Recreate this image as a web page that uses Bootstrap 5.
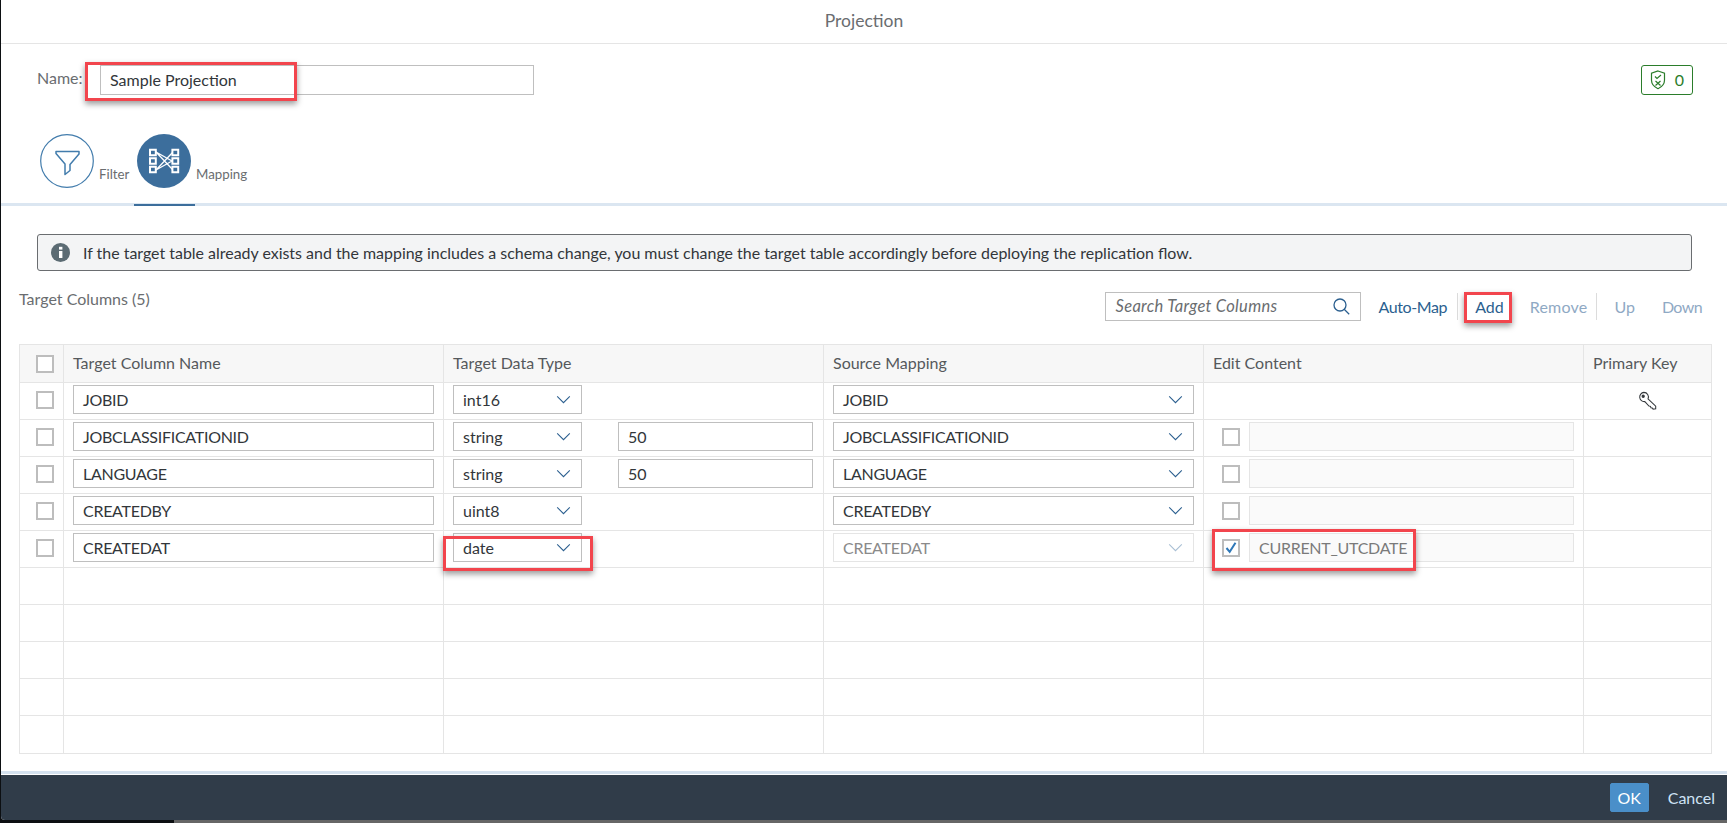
<!doctype html>
<html lang="en"><head><meta charset="utf-8"><title>Projection</title>
<link href="https://cdn.jsdelivr.net/npm/bootstrap@5.3.0/dist/css/bootstrap.min.css" rel="stylesheet">
<style>
html,body{height:100%;overflow:hidden}
body{background:#0c0f12;font-family:Lato,"Liberation Sans",sans-serif;font-size:16px;color:#32363a;position:relative}
.dlg{height:820px;margin-left:1px;background:#fff;border-bottom-left-radius:4px;overflow:hidden}
.dlg-title{height:44px;border-bottom:1px solid #e5e5e5;color:#6a6d70;font-size:17.500px;line-height:42px}
.name-row{padding:21px 34px 0 36px}
.name-label{color:#6a6d70;width:63px;line-height:25px}
.fld{height:29px;line-height:27px;padding:0 9px;border:1px solid #bfbfbf;border-radius:0;font-size:16px;color:#32363a;background-color:#fff;white-space:nowrap;overflow:hidden}
.fld-name{width:434px;height:30px;line-height:28px}
.fld-caps{letter-spacing:-.28px}
.val-badge{height:30px;width:52px;border:1px solid #2b7d2b;border-radius:3px;color:#2b7d2b;font-size:16px;gap:9px}
.tabbar{margin-top:39px;padding-left:36px;border-bottom:3px solid #dbe6f1}
.tab-box{width:61px;padding:0 3px 16px;margin-bottom:-3px;border-bottom:2px solid transparent}
.tab-box.on{border-bottom-color:#3c6e9c}
.tab-txt{font-size:13.300px;color:#6a6d70;margin:0 6px 21px 1px;line-height:16px;width:29px;white-space:nowrap}
.strip{margin:28px 35px 0 36px;height:37px;background:#f3f4f5;border:1px solid #6a6d70;border-radius:3px;padding-left:13px;gap:13px;font-size:15.950px}
.tools{margin-top:21px;padding:0 25px 0 18px;height:29px}
.tbl-title{color:#6a6d70;align-self:flex-start;line-height:14px}
.search{width:256px;height:29px;border:1px solid #bfbfbf;padding:0 10px;font-style:italic;color:#6a6d70;margin-right:18px;font-size:16.500px;letter-spacing:.3px}
.act{color:#2b5f8f;line-height:29px}
.act.off{color:#8fa9c4}
.act-map{letter-spacing:-.4px;margin-right:10px}
.act-add{margin-left:17px}
.act-rem{margin-left:26px;margin-right:9px;letter-spacing:.2px}
.act-up{margin-left:17px}
.act-down{margin-left:27px;letter-spacing:-.6px}
.sep{width:1px;height:27px;background:#dcdcdc}
.grid{width:1692px;margin:23px 0 0 18px;table-layout:fixed;border-collapse:collapse}
.grid th,.grid td{border:1px solid #e5e5e5;padding:2px 9px 0;height:37px;vertical-align:top;box-shadow:none;color:#32363a}
.grid th{background:#f7f7f7;font-weight:400;color:#55595c;height:38px;padding-top:6px;border-bottom:0}
.grid tbody tr:last-child td{height:38px}
.grid .cb-cell{padding:8px 0 0 16px}
.grid .cb-head{padding-top:10px}
.cbx{width:18px;height:18px;border:2px solid #bdbdbd;background:#fff;display:block}
.pick{background-image:url("data:image/svg+xml,%3Csvg xmlns='http://www.w3.org/2000/svg' viewBox='0 0 16 10'%3E%3Cpath d='M1 1.500l7 7 7-7' fill='none' stroke='%232b5f8f' stroke-width='1.200'/%3E%3C/svg%3E");background-repeat:no-repeat;background-position:right 10px center;background-size:15px 9px}
.fld-type{width:129px}
.fld-len{width:195px;margin-left:36px}
.fld-off{border-color:#e5e5e5;color:#8a8a8a}
.pick.fld-off{background-image:url("data:image/svg+xml,%3Csvg xmlns='http://www.w3.org/2000/svg' viewBox='0 0 16 10'%3E%3Cpath d='M1 1.500l7 7 7-7' fill='none' stroke='%23a9bfd4' stroke-width='1.200'/%3E%3C/svg%3E")}
.fld-ec{background:#fafafa;border-color:#e5e5e5;color:#7a7a7a;flex:1}
.ec-wrap{gap:9px;padding-left:9px}
.ec-wrap .cbx{margin-top:6px;flex:none}
.foot-line{height:3px;background:#d5e2ef;margin-top:17px}
.foot{height:45px;background:#303c49;margin-top:1px;padding-right:12px;gap:19px}
.ok-btn{width:39px;height:29px;line-height:27px;padding:0;background:#4a8fc9;border:1px solid #4a8fc9;color:#fff;font-size:16px;border-radius:2px}
.cancel-btn{padding:0;border:0;background:none;color:#cfe3f5;font-size:16px}
.under{height:3px;position:absolute;left:174px;right:0;bottom:0;background:#666}
.hl{position:absolute;border:3px solid #f2454d;box-shadow:0 3px 6px rgba(0,0,0,.4);pointer-events:none}
.hl-a{left:85px;top:62px;width:212px;height:39px}
.hl-b{left:1464px;top:292px;width:48px;height:31px}
.hl-c{left:443px;top:536px;width:150px;height:35px}
.hl-d{left:1212px;top:529px;width:204px;height:42px}
</style></head>
<body>
<div class="dlg d-flex flex-column">
  <div class="dlg-title text-center">Projection</div>
  <div class="name-row d-flex align-items-start">
    <span class="name-label">Name:</span>
    <div class="fld fld-name form-control">Sample Projection</div>
    <div class="val-badge ms-auto d-flex align-items-center justify-content-center">
      <svg width="16" height="20" viewBox="0 0 16 20" fill="none" stroke="#2b7d2b" stroke-width="1.200"><path d="M8 1l6.500 2.200v7c0 4-3 6.800-6.500 8.500C4.500 17 1.500 14.200 1.500 10.200v-7z"/><path d="M5 6.500l2 2 4-3.500M5.500 11l5 4.500M10.500 11l-5 4.500"/></svg>
      <span>0</span>
    </div>
  </div>
  <div class="tabbar d-flex align-items-end">
    <div class="tab-box"><svg width="54" height="54" viewBox="0 0 54 54" class="d-block" fill="none"><circle cx="27" cy="27" r="26.300" stroke="#427cac" stroke-width="1.200"/><path d="M16 17.500h23v2.500l-9 10.500v6l-5 4v-10.500l-9-10.500z" stroke="#427cac" stroke-width="1.500" stroke-linejoin="round"/></svg></div>
    <span class="tab-txt">Filter</span>
    <div class="tab-box on"><svg width="54" height="54" viewBox="0 0 54 54" class="d-block"><circle cx="27" cy="27" r="27" fill="#3c6e9c"/><g fill="none" stroke="#fff"><path stroke-width="1.300" d="M19 18l17 18M19 36l17-18M19 18l16 9M19 36l16-9"/><path stroke-width="2" fill="#3c6e9c" d="M13 15.800h5.800v5.400h-5.800zM13 24.300h5.800v5.400h-5.800zM13 32.800h5.800v5.400h-5.800zM35.400 15.800h5.800v5.400h-5.800zM35.400 24.300h5.800v5.400h-5.800zM35.400 32.800h5.800v5.400h-5.800z"/></g></svg></div>
    <span class="tab-txt">Mapping</span>
  </div>
  <div class="strip d-flex align-items-center">
    <svg width="19" height="19" viewBox="0 0 19 19"><circle cx="9.500" cy="9.500" r="9.500" fill="#5b6b73"/><rect x="8" y="8" width="3.400" height="7" fill="#fff"/><rect x="8" y="3.800" width="3.400" height="2.800" fill="#fff"/></svg>
    <span>If the target table already exists and the mapping includes a schema change, you must change the target table accordingly before deploying the replication flow.</span>
  </div>
  <div class="tools d-flex align-items-center">
    <span class="tbl-title me-auto">Target Columns (5)</span>
    <div class="search d-flex align-items-center justify-content-between">
      <span>Search Target Columns</span>
      <svg width="17" height="17" viewBox="0 0 17 17" fill="none" stroke="#2b5f8f" stroke-width="1.300"><circle cx="7" cy="7" r="6"/><path d="M11.200 11.200l5 5"/></svg>
    </div>
    <span class="act act-map">Auto-Map</span><span class="sep"></span>
    <span class="act act-add">Add</span>
    <span class="act off act-rem">Remove</span><span class="sep"></span>
    <span class="act off act-up">Up</span>
    <span class="act off act-down">Down</span>
  </div>
  <table class="grid table mb-0">
    <colgroup><col style="width:44px"><col style="width:380px"><col style="width:380px"><col style="width:380px"><col style="width:380px"><col style="width:128px"></colgroup>
    <thead><tr><th class="cb-cell cb-head"><span class="cbx"></span></th><th>Target Column Name</th><th>Target Data Type</th><th>Source Mapping</th><th>Edit Content</th><th>Primary Key</th></tr></thead>
    <tbody>
      <tr><td class="cb-cell"><span class="cbx"></span></td><td><div class="fld fld-caps">JOBID</div></td><td><div class="fld fld-type pick">int16</div></td><td><div class="fld fld-caps pick">JOBID</div></td><td></td><td class="text-center"><svg width="19" height="20" viewBox="0 0 22 23" fill="none" stroke="#32363a" stroke-width="1.200" class="mt-1"><path d="M6.800 1.500a5.300 5.300 0 0 1 4.800 7.500l8.900 8.500v3l-3 .4-1-1.400-1.500-.2-.6-1.600-1.700-.4-4.800-5.100A5.300 5.300 0 1 1 6.800 1.500z"/><circle cx="6" cy="6" r="1.300" fill="#32363a"/></svg></td></tr>
      <tr><td class="cb-cell"><span class="cbx"></span></td><td><div class="fld fld-caps">JOBCLASSIFICATIONID</div></td><td><div class="d-flex"><div class="fld fld-type pick">string</div><div class="fld fld-len">50</div></div></td><td><div class="fld fld-caps pick">JOBCLASSIFICATIONID</div></td><td><div class="d-flex ec-wrap"><span class="cbx"></span><div class="fld fld-ec"></div></div></td><td></td></tr>
      <tr><td class="cb-cell"><span class="cbx"></span></td><td><div class="fld fld-caps">LANGUAGE</div></td><td><div class="d-flex"><div class="fld fld-type pick">string</div><div class="fld fld-len">50</div></div></td><td><div class="fld fld-caps pick">LANGUAGE</div></td><td><div class="d-flex ec-wrap"><span class="cbx"></span><div class="fld fld-ec"></div></div></td><td></td></tr>
      <tr><td class="cb-cell"><span class="cbx"></span></td><td><div class="fld fld-caps">CREATEDBY</div></td><td><div class="fld fld-type pick">uint8</div></td><td><div class="fld fld-caps pick">CREATEDBY</div></td><td><div class="d-flex ec-wrap"><span class="cbx"></span><div class="fld fld-ec"></div></div></td><td></td></tr>
      <tr><td class="cb-cell"><span class="cbx"></span></td><td><div class="fld fld-caps">CREATEDAT</div></td><td><div class="fld fld-type pick">date</div></td><td><div class="fld fld-caps pick fld-off">CREATEDAT</div></td><td><div class="d-flex ec-wrap"><span class="cbx"><svg width="14" height="14" viewBox="0 0 14 14" class="d-block" fill="none" stroke="#2f78b8" stroke-width="2"><path d="M2.500 7l3.200 3.800 5.800-9"/></svg></span><div class="fld fld-ec fld-caps">CURRENT_UTCDATE</div></div></td><td></td></tr>
      <tr><td></td><td></td><td></td><td></td><td></td><td></td></tr>
      <tr><td></td><td></td><td></td><td></td><td></td><td></td></tr>
      <tr><td></td><td></td><td></td><td></td><td></td><td></td></tr>
      <tr><td></td><td></td><td></td><td></td><td></td><td></td></tr>
      <tr><td></td><td></td><td></td><td></td><td></td><td></td></tr>
    </tbody>
  </table>
  <div class="foot-line"></div>
  <div class="foot d-flex align-items-center justify-content-end">
    <button class="btn ok-btn" type="button">OK</button>
    <button class="btn cancel-btn" type="button">Cancel</button>
  </div>
</div>
<div class="under"></div>
<div class="hl hl-a"></div><div class="hl hl-b"></div><div class="hl hl-c"></div><div class="hl hl-d"></div>
<script src="https://cdn.jsdelivr.net/npm/bootstrap@5.3.0/dist/js/bootstrap.bundle.min.js"></script>
</body></html>
